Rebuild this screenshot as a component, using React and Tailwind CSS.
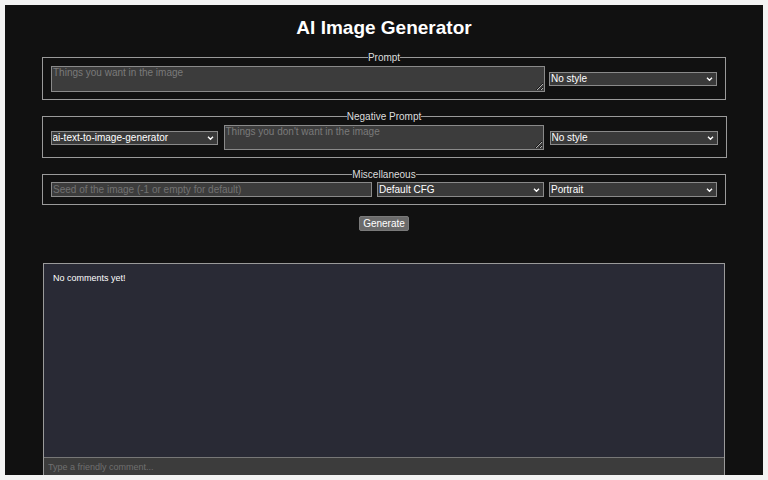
import React from "react";

const font = { fontFamily: '"Liberation Sans", Arial, sans-serif' };

function Chevron() {
  return (
    <svg
      className="pointer-events-none absolute right-[4px] top-1/2 -translate-y-1/2"
      width="7"
      height="5"
      viewBox="0 0 7 5"
      fill="none"
    >
      <path d="M1 1.2 L3.5 3.7 L6 1.2" stroke="#ffffff" strokeWidth="1.4" />
    </svg>
  );
}

function Sel({ value, className, h = "h-[14px]" }) {
  return (
    <div className={`relative ${className}`}>
      <select
        defaultValue={value}
        className={`appearance-none w-full ${h} bg-[#3a3a3a] text-white text-[10px] leading-[12px] border border-[#8a8a8a] pl-[1px] pr-[12px] block`}
      >
        <option>{value}</option>
      </select>
      <Chevron />
    </div>
  );
}

export default function App() {
  return (
    <div className="w-[768px] h-[480px] bg-[#f3f3f3] p-[5px]" style={font}>
      <div className="h-[470px] bg-[#111111] flex flex-col items-center overflow-hidden">
        <h1 className="mt-[11px] text-[19px] leading-[24px] font-bold text-white">AI Image Generator</h1>

        <fieldset className="mt-[12px] w-[682px] border border-[#9a9a9a] px-[8px] pb-[7px] pt-[3px]">
          <legend className="mx-auto px-0 text-[10px] leading-[11px] text-[#dddddd]">Prompt</legend>
          <div className="flex items-center gap-[4px]">
            <textarea
              placeholder="Things you want in the image"
              className="w-[494px] h-[26px] bg-[#3c3c3c] border border-[#8a8a8a] text-[10px] leading-[12px] text-white placeholder:text-[#7a7a7a] px-[1px] resize-y"
              style={{ colorScheme: "dark" }}
            />
            <Sel value="No style" className="w-[168px]" />
          </div>
        </fieldset>

        <fieldset className="mt-[11px] w-[682px] border border-[#9a9a9a] px-[8px] pb-[7px] pt-[3px]">
          <legend className="mx-auto px-0 text-[10px] leading-[11px] text-[#dddddd]">Negative Prompt</legend>
          <div className="flex items-center gap-[6px]">
            <Sel value="ai-text-to-image-generator" className="w-[167px]" />
            <textarea
              placeholder="Things you don't want in the image"
              className="w-[320px] h-[25px] bg-[#3c3c3c] border border-[#8a8a8a] text-[10px] leading-[12px] text-white placeholder:text-[#7a7a7a] px-[1px] resize-y"
              style={{ colorScheme: "dark" }}
            />
            <Sel value="No style" className="w-[168px]" />
          </div>
        </fieldset>

        <fieldset className="mt-[11px] w-[682px] border border-[#9a9a9a] px-[8px] pb-[7px] pt-[2px]">
          <legend className="mx-auto px-0 text-[10px] leading-[11px] text-[#dddddd]">Miscellaneous</legend>
          <div className="flex items-center gap-[5px]">
            <input
              placeholder="Seed of the image (-1 or empty for default)"
              className="w-[321px] h-[15px] bg-[#3c3c3c] border border-[#8a8a8a] text-[10px] leading-[12px] text-white placeholder:text-[#727272] px-[1px]"
            />
            <Sel value="Default CFG" className="w-[167px]" h="h-[15px]" />
            <Sel value="Portrait" className="w-[168px]" h="h-[15px]" />
          </div>
        </fieldset>

        <button className="mt-[11px] h-[15px] px-[3px] bg-[#6a6a6a] text-white text-[10px] leading-[12px] rounded-[2px] border border-[#7a7a7a]">
          Generate
        </button>

        <div className="mt-[32px] w-[682px] flex-1 flex flex-col bg-[#292a35] border-l border-r border-t border-[#9a9a9a]">
          <div className="flex-1 px-[9px] pt-[9px] text-[9px] leading-[11px] text-white">No comments yet!</div>
          <input
            placeholder="Type a friendly comment..."
            className="h-[18px] w-full bg-[#3c3c3c] border-t border-[#777777] px-[4px] pt-[1px] text-[9px] text-white placeholder:text-[#6f6f6f]"
          />
        </div>
      </div>
    </div>
  );
}
